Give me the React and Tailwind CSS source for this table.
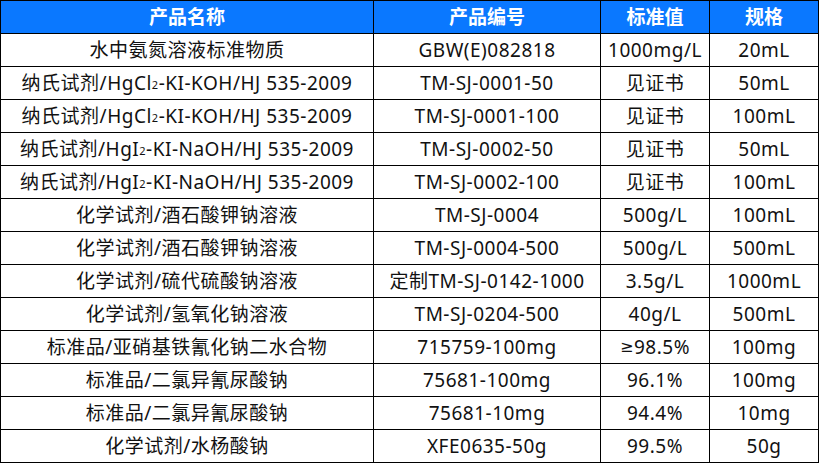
const Sub = () => <span className="text-[11px] relative top-[2px]">2</span>;

const ROWS = [
  ["水中氨氮溶液标准物质", "GBW(E)082818", "1000mg/L", "20mL"],
  [<>纳氏试剂/HgCl<Sub />-KI-KOH/HJ 535-2009</>, "TM-SJ-0001-50", "见证书", "50mL"],
  [<>纳氏试剂/HgCl<Sub />-KI-KOH/HJ 535-2009</>, "TM-SJ-0001-100", "见证书", "100mL"],
  [<>纳氏试剂/HgI<Sub />-KI-NaOH/HJ 535-2009</>, "TM-SJ-0002-50", "见证书", "50mL"],
  [<>纳氏试剂/HgI<Sub />-KI-NaOH/HJ 535-2009</>, "TM-SJ-0002-100", "见证书", "100mL"],
  ["化学试剂/酒石酸钾钠溶液", "TM-SJ-0004", "500g/L", "100mL"],
  ["化学试剂/酒石酸钾钠溶液", "TM-SJ-0004-500", "500g/L", "500mL"],
  ["化学试剂/硫代硫酸钠溶液", "定制TM-SJ-0142-1000", "3.5g/L", "1000mL"],
  ["化学试剂/氢氧化钠溶液", "TM-SJ-0204-500", "40g/L", "500mL"],
  ["标准品/亚硝基铁氰化钠二水合物", "715759-100mg", <><span style={{ fontFamily: '"DejaVu Sans", sans-serif' }} className="text-[16px]">≥</span>98.5%</>, "100mg"],
  ["标准品/二氯异氰尿酸钠", "75681-100mg", "96.1%", "100mg"],
  ["标准品/二氯异氰尿酸钠", "75681-10mg", "94.4%", "10mg"],
  ["化学试剂/水杨酸钠", "XFE0635-50g", "99.5%", "50g"],
];

const HEAD = ["产品名称", "产品编号", "标准值", "规格"];

export default function App() {
  return (
    <div
      className="w-[819px] h-[463px] bg-white overflow-hidden"
      style={{ fontFamily: '"Noto Sans", "Noto Sans CJK SC", sans-serif' }}
    >
      <div className="grid grid-cols-[373px_227px_109px_109px] border-t border-l border-black text-[19px] tracking-[0.5px] text-[#111]">
        {HEAD.map((h) => (
          <div
            key={h}
            className="h-[33px] flex items-center justify-center bg-[#0a78ff] text-white font-bold tracking-normal border-r border-b border-black"
          >
            {h}
          </div>
        ))}
        {ROWS.map((row, i) =>
          row.map((cell, j) => (
            <div
              key={i + "-" + j}
              className="h-[33px] flex items-center justify-center whitespace-nowrap border-r border-b border-black"
            >
              {cell}
            </div>
          ))
        )}
      </div>
    </div>
  );
}
